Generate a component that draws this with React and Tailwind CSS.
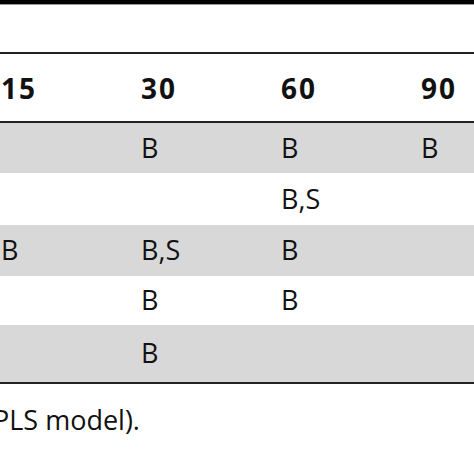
const rows = [
  { cells: ['', 'B', 'B', 'B'], shade: true, h: 'h-[50px]' },
  { cells: ['', '', 'B,S', ''], shade: false, h: 'h-[52px]' },
  { cells: ['B', 'B,S', 'B', ''], shade: true, h: 'h-[51px]' },
  { cells: ['', 'B', 'B', ''], shade: false, h: 'h-[49px]' },
  { cells: ['', 'B', '', ''], shade: true, h: 'h-[57px]' },
];

const headers = ['15', '30', '60', '90'];

export default function App() {
  return (
    <div className="h-[474px] w-[474px] overflow-hidden bg-white text-[27px] text-[#111] [font-family:'Open_Sans',sans-serif]">
      <div className="h-[4px] bg-black" />
      <div className="h-[1px] bg-[#9a9a9a]" />
      <div className="h-[47px]" />
      <div className="h-[2px] bg-[#222]" />
      <div className="grid h-[67px] grid-cols-[140px_140px_140px_140px] items-center text-[28px] font-bold">
        {headers.map((h) => (
          <div key={h} className="pl-[1px] tracking-[2px]">{h}</div>
        ))}
      </div>
      <div className="h-[2px] bg-[#222]" />
      {rows.map((r, i) => (
        <div
          key={i}
          className={`grid grid-cols-[140px_140px_140px_140px] items-center ${r.h} ${r.shade ? 'bg-[#d8d8d8]' : 'bg-white'}`}
        >
          {r.cells.map((c, j) => (
            <div key={j} className="pl-[1px]">{c}</div>
          ))}
        </div>
      ))}
      <div className="h-[2px] bg-[#222]" />
      <p className="mt-[18px] ml-[-7px] whitespace-nowrap leading-[36px]">PLS model).</p>
    </div>
  );
}
